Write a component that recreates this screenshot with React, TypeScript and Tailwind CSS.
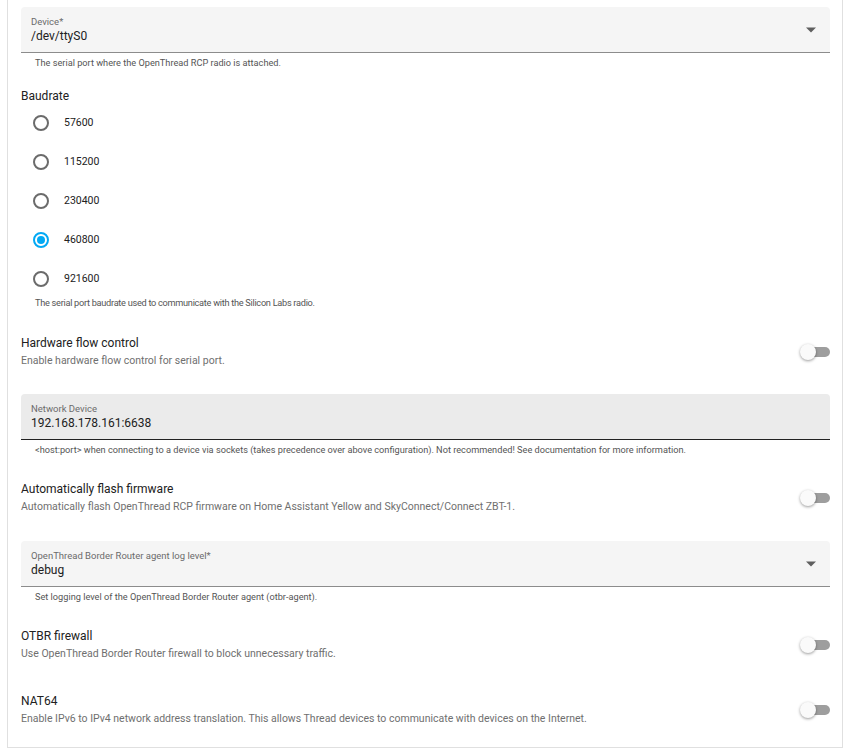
import React from "react";

const BAUDRATES = ["57600", "115200", "230400", "460800", "921600"];

const FONT = { fontFamily: "Roboto, 'Noto Sans', sans-serif" };

const Field = ({
  label,
  value,
  helper,
  select,
  focused,
}: {
  label: string;
  value: string;
  helper: string;
  select?: boolean;
  focused?: boolean;
}) => (
  <div>
    <div
      className={`flex h-[46px] items-center justify-between rounded-t-[4px] border-b pl-[10px] pr-[14px] ${
        focused ? "bg-[#ebebeb] border-[#212121]" : "bg-[#f5f5f5] border-[#8c8c8c]"
      }`}
    >
      <div className="flex flex-col pt-[1px]">
        <span className="text-[9.5px] leading-[12px] text-[#6b6b6b]">{label}</span>
        <span className="text-[12px] leading-[17px] text-[#212121]">{value}</span>
      </div>
      {select && (
        <svg width="10" height="6" viewBox="0 0 10 5" className="mt-[1px]">
          <path d="M0 0 L10 0 L5 5 Z" fill="#5f5f5f" />
        </svg>
      )}
    </div>
    <div className="pl-[14px] pt-[4px] text-[9.2px] leading-[12px] text-[#555]">{helper}</div>
  </div>
);

const Toggle = () => (
  <div className="relative h-[16px] w-[30px] shrink-0">
    <div className="absolute right-0 top-[3px] h-[10px] w-[22px] rounded-full bg-[#9e9e9e]" />
    <div className="absolute left-0 top-0 h-[16px] w-[16px] rounded-full bg-[#fafafa] shadow-[0_1px_3px_rgba(0,0,0,0.4)]" />
  </div>
);

const SwitchRow = ({ title, desc }: { title: string; desc: string }) => (
  <div className="flex items-center justify-between">
    <div className="flex flex-col">
      <span className="text-[12px] leading-[18px] text-[#212121]">{title}</span>
      <span className="text-[10.5px] leading-[18px] text-[#6f6f6f]">{desc}</span>
    </div>
    <Toggle />
  </div>
);

const Radio = ({ value, checked }: { value: string; checked?: boolean }) => (
  <div className="flex h-[39px] items-center">
    <div className="flex w-[40px] justify-center">
      <div
        className={`flex h-[16px] w-[16px] items-center justify-center rounded-full border-2 ${
          checked ? "border-[#03a9f4]" : "border-[#6b6b6b]"
        }`}
      >
        {checked && <div className="h-[8px] w-[8px] rounded-full bg-[#03a9f4]" />}
      </div>
    </div>
    <span className="ml-[3px] text-[10.5px] text-[#212121]">{value}</span>
  </div>
);

export default function App() {
  return (
    <div className="min-h-[750px] bg-white" style={FONT}>
      <div className="ml-[7px] mr-[4px] border-x border-b border-[#e0e0e0] pl-[13px] pr-[12px] pt-[7px] pb-[19px]">
        <Field
          label="Device*"
          value="/dev/ttyS0"
          helper="The serial port where the OpenThread RCP radio is attached."
          select
        />

        <div className="mt-[18px] text-[12px] leading-[18px] text-[#212121]">Baudrate</div>
        <div className="-mt-[2px] flex flex-col">
          {BAUDRATES.map((b) => (
            <Radio key={b} value={b} checked={b === "460800"} />
          ))}
        </div>
        <div className="-mt-[1px] pl-[14px] text-[9.2px] leading-[12px] tracking-[-0.28px] text-[#555]">
          The serial port baudrate used to communicate with the Silicon Labs radio.
        </div>

        <div className="mt-[25px]">
          <SwitchRow
            title="Hardware flow control"
            desc="Enable hardware flow control for serial port."
          />
        </div>

        <div className="mt-[24px]">
          <Field
            label="Network Device"
            value="192.168.178.161:6638"
            helper="<host:port> when connecting to a device via sockets (takes precedence over above configuration). Not recommended! See documentation for more information."
            focused
          />
        </div>

        <div className="mt-[24px]">
          <SwitchRow
            title="Automatically flash firmware"
            desc="Automatically flash OpenThread RCP firmware on Home Assistant Yellow and SkyConnect/Connect ZBT-1."
          />
        </div>

        <div className="mt-[25px]">
          <Field
            label="OpenThread Border Router agent log level*"
            value="debug"
            helper="Set logging level of the OpenThread Border Router agent (otbr-agent)."
            select
          />
        </div>

        <div className="mt-[24px]">
          <SwitchRow
            title="OTBR firewall"
            desc="Use OpenThread Border Router firewall to block unnecessary traffic."
          />
        </div>

        <div className="mt-[29px]">
          <SwitchRow
            title="NAT64"
            desc="Enable IPv6 to IPv4 network address translation. This allows Thread devices to communicate with devices on the Internet."
          />
        </div>
      </div>
    </div>
  );
}
